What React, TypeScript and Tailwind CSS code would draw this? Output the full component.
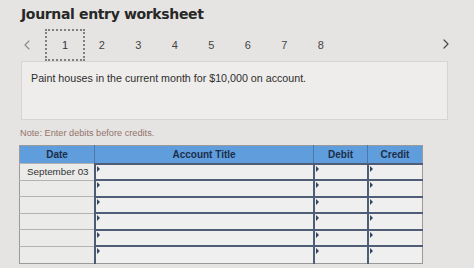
import { ChevronLeft, ChevronRight } from 'lucide-react';

const rows = ['September 03', '', '', '', '', ''];

function Marker() {
  return (
    <span className="absolute left-[1px] top-[1px] w-0 h-0 border-t-[3px] border-b-[3px] border-l-[3px] border-t-transparent border-b-transparent border-l-[#34455f]" />
  );
}

export default function App() {
  return (
    <div
      className="w-[474px] h-[268px] bg-[#e5e4e2] overflow-hidden text-[#2b2b2b]"
      style={{ fontFamily: '"Liberation Sans", Arial, sans-serif' }}
    >
      <div className="pl-[21px] pt-[4px] h-[27px] text-[14px] font-bold leading-[20px] text-[#272727]" style={{ fontFamily: '"DejaVu Sans", Verdana, sans-serif', letterSpacing: '-0.35px' }}>
        Journal entry worksheet
      </div>

      <div className="flex items-center h-[32px] mt-[2px]">
        <div className="w-[45px] pl-[19px] flex items-center text-[#8a8a8a]">
          <ChevronLeft size={16} strokeWidth={1.6} />
        </div>
        <div className="w-[40px] h-[32px] border-2 border-dotted border-[#808080] flex items-center justify-center text-[11px] text-[#333]">
          1
        </div>
        <div className="flex ml-[-1.5px] text-[11px] text-[#444]">
          {['2', '3', '4', '5', '6', '7', '8'].map((n) => (
            <div key={n} className="w-[36.5px] text-center">
              {n}
            </div>
          ))}
        </div>
        <div className="ml-auto mr-[20px] text-[#4a4a4a] mt-[-2px]">
          <ChevronRight size={16} strokeWidth={1.8} />
        </div>
      </div>

      <div className="ml-[21px] w-[427px] h-[59px] bg-[#eeedeb] border border-[#d6d5d3] pl-[9px] pt-[8px] text-[10.7px] text-[#2e2e2e]">
        Paint houses in the current month for $10,000 on account.
      </div>

      <div className="pl-[20px] mt-[7px] h-[18px] text-[9.2px] text-[#94736a]">
        Note: Enter debits before credits.
      </div>

      <table className="ml-[19px] border-collapse table-fixed w-[403px] border border-[#9a9a9a]">
        <colgroup>
          <col className="w-[75px]" />
          <col className="w-[219px]" />
          <col className="w-[54px]" />
          <col className="w-[55px]" />
        </colgroup>
        <thead>
          <tr className="h-[18px] bg-[#5f9ddc] text-[10px] font-bold text-[#1c2e4a]">
            <th className="border-r border-[#4a78a8] font-bold">Date</th>
            <th className="border-r border-[#4a78a8] font-bold">Account Title</th>
            <th className="border-r border-[#4a78a8] font-bold">Debit</th>
            <th className="font-bold">Credit</th>
          </tr>
        </thead>
        <tbody>
          {rows.map((d, i) => (
            <tr key={i} className="h-[16.6px]">
              <td className="bg-[#ebebea] border-t border-[#b3b3b3] border-r-2 border-r-[#4d5b72] pl-[7px] text-[9.8px] text-[#333] leading-[14px] whitespace-nowrap overflow-hidden">
                {d}
              </td>
              <td className="relative bg-[#efefef] border-t-2 border-[#4f5d76] border-r-2">
                <Marker />
              </td>
              <td className="relative bg-[#efefef] border-t-2 border-[#4f5d76] border-r-2">
                <Marker />
              </td>
              <td className="relative bg-[#efefef] border-t-2 border-[#4f5d76]">
                <Marker />
              </td>
            </tr>
          ))}
        </tbody>
      </table>
    </div>
  );
}
